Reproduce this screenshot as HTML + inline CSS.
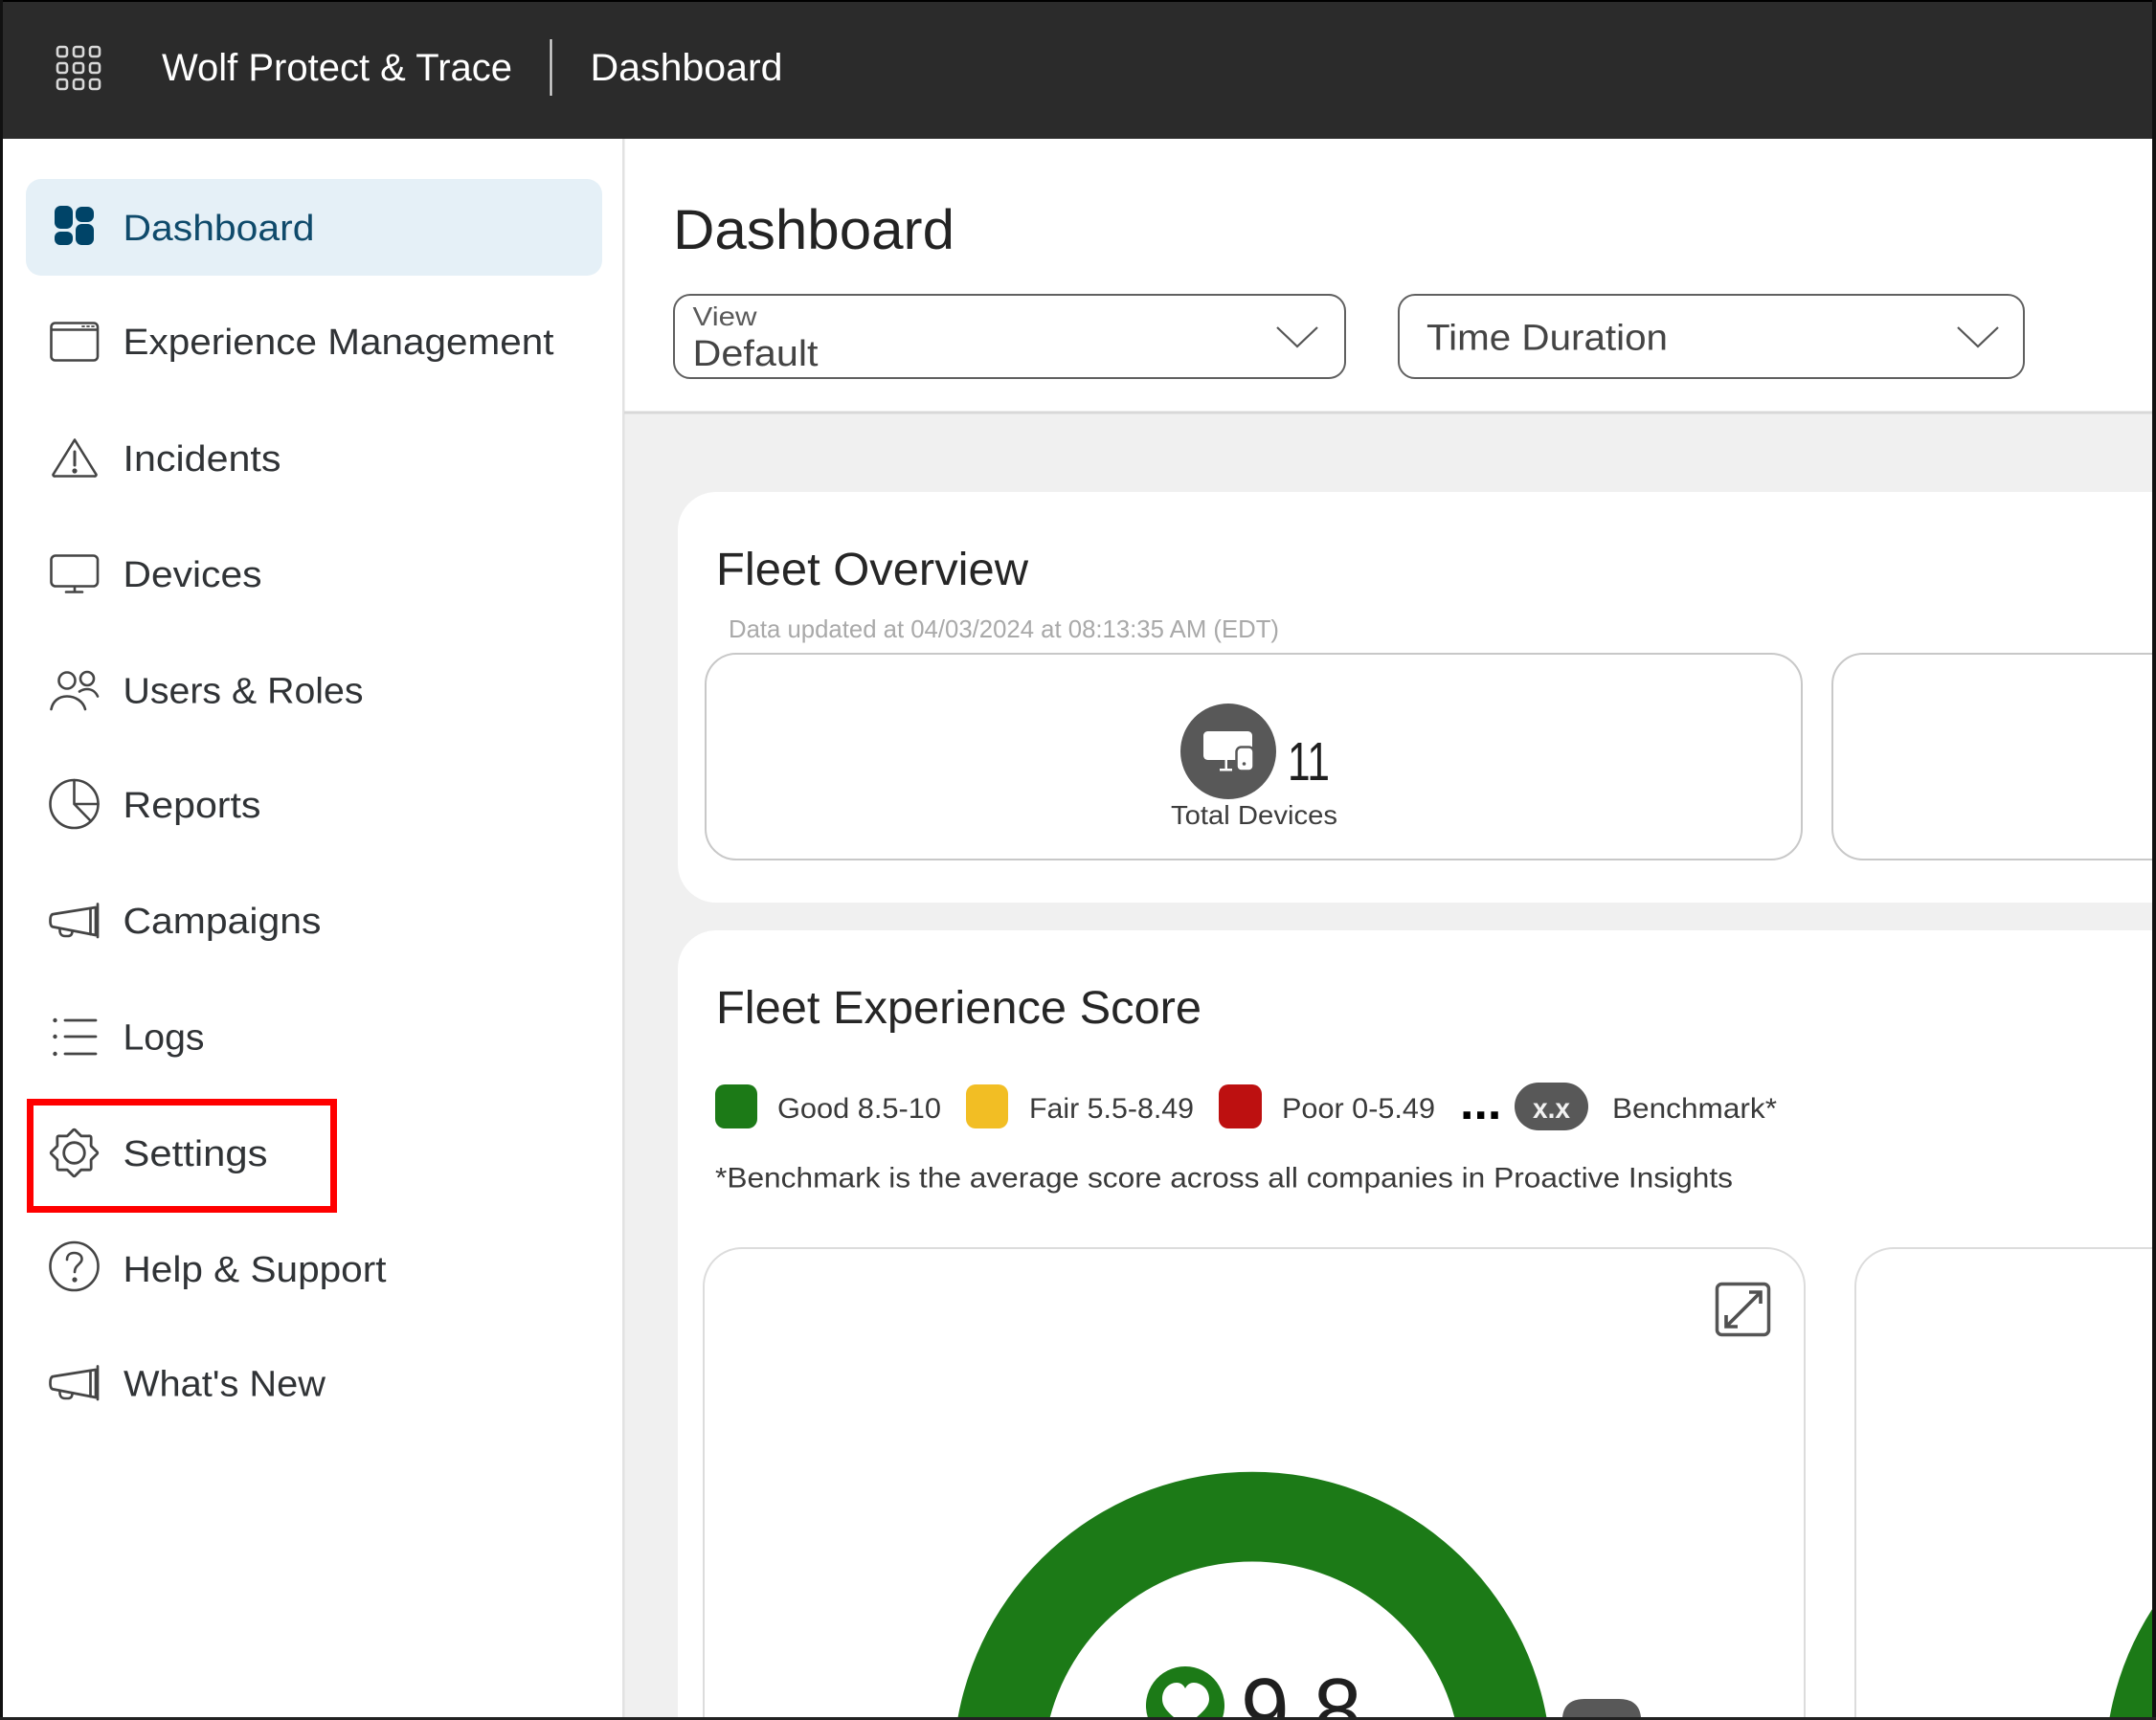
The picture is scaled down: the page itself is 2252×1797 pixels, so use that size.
<!DOCTYPE html>
<html lang="en">
<head>
<meta charset="utf-8">
<title>Wolf Protect &amp; Trace - Dashboard</title>
<style>
html,body{margin:0;padding:0;background:#fff;width:2252px;height:1797px;overflow:hidden;position:relative}
svg{display:block}
text{font-family:"Liberation Sans",sans-serif;white-space:pre}
.n{font-size:38px;fill:#303336}
.ic{fill:none;stroke:#454545;stroke-width:2.6;stroke-linecap:round;stroke-linejoin:round}
.l{font-size:30px;fill:#3a3a3a}
#score{position:absolute;left:1296px;top:1735px;width:133px;height:59px;overflow:hidden;font:96px/105px "Liberation Sans",sans-serif;color:#1f1f1f;transform:scaleX(.947);transform-origin:left top;white-space:nowrap}
</style>
</head>
<body>
<svg width="2252" height="1797" viewBox="0 0 2252 1797" xmlns="http://www.w3.org/2000/svg">
<rect width="2252" height="1797" fill="#fff"/>

<!-- main area -->
<rect x="652" y="432" width="1600" height="1365" fill="#f0f0f0"/>
<rect x="650" y="145" width="2.5" height="1652" fill="#e2e2e2"/>
<rect x="652" y="429.500" width="1600" height="3" fill="#d8d8d8"/>

<!-- top bar -->
<rect x="0" y="0" width="2252" height="145" fill="#2b2b2b"/>
<g fill="none" stroke="#d8d8d8" stroke-width="2.6">
<rect x="60" y="49" width="10" height="10" rx="2.500"/><rect x="77" y="49" width="10" height="10" rx="2.500"/><rect x="94" y="49" width="10" height="10" rx="2.500"/>
<rect x="60" y="66" width="10" height="10" rx="2.500"/><rect x="77" y="66" width="10" height="10" rx="2.500"/><rect x="94" y="66" width="10" height="10" rx="2.500"/>
<rect x="60" y="83" width="10" height="10" rx="2.500"/><rect x="77" y="83" width="10" height="10" rx="2.500"/><rect x="94" y="83" width="10" height="10" rx="2.500"/>
</g>
<text x="169" y="84" font-size="40" fill="#fff" textLength="366" lengthAdjust="spacingAndGlyphs">Wolf Protect &amp; Trace</text>
<rect x="574.500" y="41" width="2" height="59" fill="#f0f0f0"/>
<text x="616.500" y="84" font-size="40" fill="#fff" textLength="201" lengthAdjust="spacingAndGlyphs">Dashboard</text>

<!-- sidebar active -->
<rect x="27" y="187" width="602" height="101" rx="16" fill="#e5f0f7"/>
<g fill="#004468">
<rect x="57" y="215" width="19" height="24" rx="6.500"/>
<rect x="79" y="216" width="19" height="16" rx="6.500"/>
<rect x="57" y="242" width="19" height="14" rx="6"/>
<rect x="79" y="234" width="19" height="22" rx="6.500"/>
</g>
<text x="128.500" y="251" font-size="38" fill="#0f4a6b" textLength="200" lengthAdjust="spacingAndGlyphs">Dashboard</text>

<!-- nav text -->
<text class="n" x="128.500" y="370" textLength="450" lengthAdjust="spacingAndGlyphs">Experience Management</text>
<text class="n" x="128.500" y="492" textLength="165" lengthAdjust="spacingAndGlyphs">Incidents</text>
<text class="n" x="128.500" y="613" textLength="145" lengthAdjust="spacingAndGlyphs">Devices</text>
<text class="n" x="128.500" y="734.500" textLength="251" lengthAdjust="spacingAndGlyphs">Users &amp; Roles</text>
<text class="n" x="128.500" y="854" textLength="144" lengthAdjust="spacingAndGlyphs">Reports</text>
<text class="n" x="128.500" y="975" textLength="207" lengthAdjust="spacingAndGlyphs">Campaigns</text>
<text class="n" x="128.500" y="1096.500" textLength="85" lengthAdjust="spacingAndGlyphs">Logs</text>
<text class="n" x="128.500" y="1218" textLength="151" lengthAdjust="spacingAndGlyphs">Settings</text>
<text class="n" x="128.500" y="1339" textLength="275" lengthAdjust="spacingAndGlyphs">Help &amp; Support</text>
<text class="n" x="129" y="1458.500" textLength="211" lengthAdjust="spacingAndGlyphs">What's New</text>

<!-- nav icons -->
<g class="ic">
<!-- experience -->
<rect x="53.500" y="337.500" width="48.500" height="39" rx="4"/>
<path d="M54 344.500H101.500"/>
<path d="M86 341H88M91 341H93M96 341H98" stroke-width="1.800"/>
<!-- incidents -->
<path d="M78 459.500 56 495a1.500 1.500 0 0 0 1.500 2.500H98.500a1.500 1.500 0 0 0 1.500-2.500Z"/>
<path d="M78 472V486" stroke-width="3"/>
<circle cx="78" cy="492" r="1.300" fill="#454545"/>
<!-- devices -->
<rect x="53.500" y="580.500" width="48.500" height="32" rx="4.500"/>
<path d="M78 613V618M69 618.500H86"/>
<!-- users -->
<ellipse cx="70" cy="711" rx="8.500" ry="8.500"/>
<path d="M53.500 741C55 733 61 727.500 70 727.500S87 733 89 741"/>
<circle cx="91" cy="709" r="7"/>
<path d="M83 722.500C86 720.500 88 720 91 720C96 720 100 723 102 727.500"/>
<!-- reports -->
<circle cx="77.500" cy="840" r="25"/>
<path d="M77.500 815V840H102.500M77.500 840 95 858"/>
<!-- campaigns -->
<path d="M56 955 100 948V977L56 968.500Q52.500 968.500 52.500 962Q52.500 955 56 955Z" stroke-width="2.700"/>
<path d="M94.500 949V976M102 944.500V979" stroke-width="2.700"/>
<path d="M62.500 970.500Q62 978 68 978H71Q75 978 75.500 973.500" stroke-width="2.600"/>
<!-- logs -->
<path d="M68 1066H100M68 1083H100M68 1101H100" stroke-width="2.800"/>
<!-- settings -->
<path transform="translate(77.500 1204.500)" d="M-7.300-17.600L-1.800-23.150Q0-25.500 1.800-23.150L7.300-17.600L15.100-17.700Q18-18 17.700-15.100L17.600-7.300L23.150-1.800Q25.500 0 23.150 1.800L17.600 7.300L17.700 15.100Q18 18 15.100 17.700L7.300 17.600L1.800 23.150Q0 25.500-1.800 23.150L-7.300 17.600L-15.100 17.700Q-18 18-17.700 15.100L-17.600 7.300L-23.150 1.800Q-25.500 0-23.150-1.800L-17.600-7.300L-17.700-15.100Q-18-18-15.100-17.700Z" stroke-width="2.800"/>
<circle cx="77.500" cy="1204.500" r="10.800" stroke-width="2.800"/>
<!-- help -->
<circle cx="77.500" cy="1323" r="25"/>
<path d="M70 1316C70 1311.500 73 1309 77.500 1309C82 1309 85.500 1311.500 85.500 1315.500C85.500 1320.500 78 1321.500 78 1329"/>
<circle cx="78" cy="1337" r="1.300" fill="#454545"/>
<!-- what's new -->
<path d="M56 1438 100 1431V1460L56 1451.500Q52.500 1451.500 52.500 1445Q52.500 1438 56 1438Z" stroke-width="2.700"/>
<path d="M94.500 1432V1459M102 1427.500V1462" stroke-width="2.700"/>
<path d="M62.500 1453.500Q62 1461 68 1461H71Q75 1461 75.500 1456.500" stroke-width="2.600"/>
</g>
<g fill="#454545">
<circle cx="57.500" cy="1066" r="2.200"/><circle cx="57.500" cy="1083" r="2.200"/><circle cx="57.500" cy="1101" r="2.200"/>
</g>

<!-- red highlight -->
<rect x="31.500" y="1151.500" width="317" height="112" fill="none" stroke="#ff0000" stroke-width="7"/>

<!-- header -->
<text x="703" y="260" font-size="58" fill="#232323" textLength="294" lengthAdjust="spacingAndGlyphs">Dashboard</text>
<rect x="704" y="308" width="701" height="87" rx="17" fill="#fff" stroke="#606060" stroke-width="2"/>
<text x="723.500" y="340" font-size="28" fill="#5a5a5a" textLength="67" lengthAdjust="spacingAndGlyphs">View</text>
<text x="723.500" y="382" font-size="38" fill="#444" textLength="131" lengthAdjust="spacingAndGlyphs">Default</text>
<path d="M1334 342 1355 362 1376 342" fill="none" stroke="#555" stroke-width="2.200"/>
<rect x="1461" y="308" width="653" height="87" rx="17" fill="#fff" stroke="#606060" stroke-width="2"/>
<text x="1490" y="365.500" font-size="38" fill="#444" textLength="252" lengthAdjust="spacingAndGlyphs">Time Duration</text>
<path d="M2045 342 2066 362 2087 342" fill="none" stroke="#555" stroke-width="2.200"/>

<!-- Fleet Overview card -->
<path d="M2252 514H748A40 40 0 0 0 708 554V903A40 40 0 0 0 748 943H2252Z" fill="#fff"/>
<text x="748" y="611" font-size="48" fill="#262626" textLength="326" lengthAdjust="spacingAndGlyphs">Fleet Overview</text>
<text x="761" y="666" font-size="26" fill="#a9a9a9" textLength="575" lengthAdjust="spacingAndGlyphs">Data updated at 04/03/2024 at 08:13:35 AM (EDT)</text>
<rect x="737" y="683" width="1145" height="215" rx="32" fill="#fff" stroke="#c8c8c8" stroke-width="2"/>
<path d="M2252 683H1946A32 32 0 0 0 1914 715V866A32 32 0 0 0 1946 898H2252" fill="#fff" stroke="#c8c8c8" stroke-width="2"/>
<circle cx="1283" cy="785" r="50" fill="#585858"/>
<rect x="1257" y="764" width="51" height="30" rx="4.500" fill="#fff"/>
<rect x="1274" y="803" width="13" height="2.500" fill="#fff"/>
<rect x="1279.500" y="794" width="2.500" height="10" fill="#fff"/>
<rect x="1291.500" y="780.500" width="18" height="25" rx="5" fill="#fff" stroke="#585858" stroke-width="2.500"/>
<circle cx="1299.500" cy="798" r="1.800" fill="#585858"/>
<text x="1345" y="815" font-size="57" fill="#1f1f1f" textLength="44" lengthAdjust="spacingAndGlyphs">11</text>
<text x="1223" y="861" font-size="28" fill="#3d3d3d" textLength="174" lengthAdjust="spacingAndGlyphs">Total Devices</text>

<!-- Fleet Experience Score card -->
<path d="M2252 972H748A40 40 0 0 0 708 1012V1797H2252Z" fill="#fff"/>
<text x="748" y="1069" font-size="48" fill="#262626" textLength="507" lengthAdjust="spacingAndGlyphs">Fleet Experience Score</text>

<rect x="747" y="1133" width="44" height="46" rx="10" fill="#1c7a17"/>
<text class="l" x="812" y="1168" textLength="171" lengthAdjust="spacingAndGlyphs">Good 8.5-10</text>
<rect x="1009" y="1133" width="44" height="46" rx="10" fill="#f2be24"/>
<text class="l" x="1075" y="1168" textLength="172" lengthAdjust="spacingAndGlyphs">Fair 5.5-8.49</text>
<rect x="1273" y="1133" width="45" height="46" rx="10" fill="#bd1010"/>
<text class="l" x="1339" y="1168" textLength="160" lengthAdjust="spacingAndGlyphs">Poor 0-5.49</text>
<text x="1525" y="1169" font-size="52" font-weight="700" fill="#000">...</text>
<rect x="1582" y="1131" width="77" height="50" rx="25" fill="#585858"/>
<text x="1601" y="1168" font-size="30" font-weight="700" fill="#f2f2f2" textLength="39" lengthAdjust="spacingAndGlyphs">x.x</text>
<text class="l" x="1684" y="1168" textLength="172" lengthAdjust="spacingAndGlyphs">Benchmark*</text>
<text class="l" x="747" y="1240.500" textLength="1063" lengthAdjust="spacingAndGlyphs">*Benchmark is the average score across all companies in Proactive Insights</text>

<!-- chart cards -->
<path d="M735 1794V1344A40 40 0 0 1 775 1304H1845A40 40 0 0 1 1885 1344V1794" fill="#fff" stroke="#dcdcdc" stroke-width="2"/>
<path d="M1938 1794V1344A40 40 0 0 1 1978 1304H2252V1794Z" fill="#fff"/>
<path d="M1938 1794V1344A40 40 0 0 1 1978 1304H2252" fill="none" stroke="#dcdcdc" stroke-width="2"/>

<!-- expand icon -->
<rect x="1793.500" y="1341.500" width="54" height="53" rx="5" fill="none" stroke="#555" stroke-width="3.500"/>
<path d="M1803 1386 1839 1350M1827 1350H1839V1362M1803 1374V1386H1815" fill="none" stroke="#505050" stroke-width="3.600"/>

<!-- donuts -->
<path d="M1000.600 1794A312.500 312.500 0 0 1 1615.400 1794H1519.200A218.500 218.500 0 0 0 1096.800 1794Z" fill="#1c7a17"/>
<path d="M2203.600 1794A312.500 312.500 0 0 1 2248 1681.200V1794Z" fill="#1c7a17"/>
<path d="M1198.800 1794A41 41 0 1 1 1277.200 1794Z" fill="#1c7a17"/>
<path d="M1226 1794C1218 1787 1214 1782 1214 1775C1214 1764 1222 1758 1229 1758C1233 1758 1236 1760 1238 1764C1240 1760 1243 1758 1247 1758C1254 1758 1263 1764 1263 1775C1263 1782 1258 1787 1250 1794Z" fill="#fff"/>
<path d="M1632 1794Q1634 1775 1655 1775H1691Q1712 1775 1714 1794Z" fill="#585858"/>

<!-- screenshot frame -->
<rect x="0" y="0" width="2252" height="2" fill="#000"/>
<rect x="0" y="0" width="3" height="1797" fill="#111"/>
<rect x="2248" y="0" width="4" height="1797" fill="#111"/>
<rect x="0" y="1794" width="2252" height="3" fill="#222"/>
</svg>
<div id="score">9.8</div>
</body>
</html>
